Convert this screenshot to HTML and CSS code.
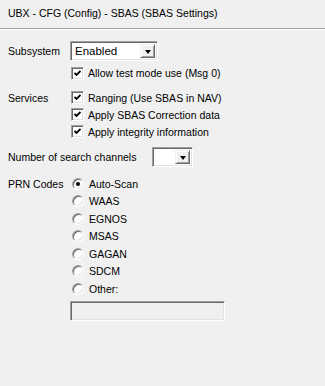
FILE: index.html
```html
<!DOCTYPE html>
<html lang="en">
<head>
  <meta charset="UTF-8">
  <title>UBX - CFG (Config) - SBAS</title>
  <link rel="stylesheet" href="styles.css">
</head>
<body>
  <div class="title">UBX - CFG (Config) - SBAS (SBAS Settings)</div>
  <div class="sep"></div>

  <div class="panel">
    <div class="row subsystem">
      <span class="label">Subsystem</span>
      <div class="combo wide">
        <span class="combo-text">Enabled</span>
        <span class="combo-btn"><span class="arrow"></span></span>
      </div>
    </div>

    <div class="row check-row test-row">
      <span class="label"></span>
      <span class="check on"><svg width="7" height="7" viewBox="0 0 7 7"><path d="M0.5 3 L2.5 5 L6.5 1" fill="none" stroke="#000" stroke-width="1.8"/></svg></span>
      <span class="text">Allow test mode use (Msg 0)</span>
    </div>

    <div class="services">
      <div class="row check-row">
        <span class="label">Services</span>
        <span class="check on"><svg width="7" height="7" viewBox="0 0 7 7"><path d="M0.5 3 L2.5 5 L6.5 1" fill="none" stroke="#000" stroke-width="1.8"/></svg></span>
        <span class="text">Ranging (Use SBAS in NAV)</span>
      </div>
      <div class="row check-row">
        <span class="label"></span>
        <span class="check on"><svg width="7" height="7" viewBox="0 0 7 7"><path d="M0.5 3 L2.5 5 L6.5 1" fill="none" stroke="#000" stroke-width="1.8"/></svg></span>
        <span class="text">Apply SBAS Correction data</span>
      </div>
      <div class="row check-row">
        <span class="label"></span>
        <span class="check on"><svg width="7" height="7" viewBox="0 0 7 7"><path d="M0.5 3 L2.5 5 L6.5 1" fill="none" stroke="#000" stroke-width="1.8"/></svg></span>
        <span class="text">Apply integrity information</span>
      </div>
    </div>

    <div class="row channels">
      <span class="label-long">Number of search channels</span>
      <div class="combo narrow">
        <span class="combo-text"></span>
        <span class="combo-btn"><span class="arrow"></span></span>
      </div>
    </div>

    <div class="prn">
      <div class="row radio-row">
        <span class="label">PRN Codes</span>
        <span class="radio on"></span>
        <span class="text">Auto-Scan</span>
      </div>
      <div class="row radio-row"><span class="label"></span><span class="radio"></span><span class="text">WAAS</span></div>
      <div class="row radio-row"><span class="label"></span><span class="radio"></span><span class="text">EGNOS</span></div>
      <div class="row radio-row"><span class="label"></span><span class="radio"></span><span class="text">MSAS</span></div>
      <div class="row radio-row"><span class="label"></span><span class="radio"></span><span class="text">GAGAN</span></div>
      <div class="row radio-row"><span class="label"></span><span class="radio"></span><span class="text">SDCM</span></div>
      <div class="row radio-row"><span class="label"></span><span class="radio"></span><span class="text">Other:</span></div>
      <div class="row other-row">
        <span class="label"></span>
        <div class="edit"></div>
      </div>
    </div>
  </div>
</body>
</html>
```

FILE: styles.css
```css
body { margin: 0; background: #f0f0f0; font-family: "Liberation Sans", Arial, sans-serif; font-size: 10.5px; color: #000; width: 325px; height: 386px; overflow: hidden; }
.title { height: 28px; line-height: 26px; padding-left: 8px; }
.sep { border-top: 1px solid #a0a0a0; border-bottom: 1px solid #fff; }
.panel { padding-left: 8px; }
.row { display: flex; align-items: center; }
.label { width: 62px; flex: none; }
.label-long { width: 144px; flex: none; }
.subsystem { margin-top: 11px; height: 20px; }
.combo { display: flex; height: 20px; box-sizing: border-box; background: #fff; border: 1px solid; border-color: #a0a0a0 #fff #fff #a0a0a0; box-shadow: inset 1px 1px #696969, inset -1px -1px #e3e3e3; padding: 2px; }
.combo.wide { width: 88px; }
.combo.narrow { width: 41px; }
.combo-text { flex: 1; line-height: 15px; padding-left: 2px; font-size: 11.5px; }
.combo-btn { width: 15px; height: 14px; box-sizing: border-box; background: #f0f0f0; border: 1px solid; border-color: #f0f0f0 #696969 #696969 #f0f0f0; box-shadow: inset 1px 1px #fff, inset -1px -1px #a0a0a0; display: flex; align-items: center; justify-content: center; }
.arrow { width: 0; height: 0; border-left: 3.5px solid transparent; border-right: 3.5px solid transparent; border-top: 4px solid #000; margin-top: 1px; }
.check-row { height: 17px; }
.test-row { margin-top: 4px; height: 16px; }
.services { margin-top: 8px; }
.check { width: 13px; height: 13px; box-sizing: border-box; flex: none; margin-left: 1px; background: #fff; border: 1px solid; border-color: #a0a0a0 #fff #fff #a0a0a0; box-shadow: inset 1px 1px #696969, inset -1px -1px #e3e3e3; display: flex; align-items: center; justify-content: center; }
.check svg { display: block; }
.text { margin-left: 4px; white-space: nowrap; }
.radio-row .text { margin-left: 5px; }
.channels { margin-top: 7px; height: 20px; }
.prn { margin-top: 8px; }
.radio-row { height: 17.5px; }
.radio { position: relative; width: 12px; height: 12px; box-sizing: border-box; flex: none; margin-left: 2px; border-radius: 50%; background: #fff; border: 1px solid; border-color: #a0a0a0 #fff #fff #a0a0a0; box-shadow: inset 1px 1px #696969, inset -1px -1px #e3e3e3; }
.radio.on::after { content: ""; position: absolute; left: 3px; top: 3px; width: 4px; height: 4px; border-radius: 50%; background: #000; }
.other-row { margin-top: 3px; }
.edit { width: 155px; height: 20px; box-sizing: border-box; background: #f0f0f0; border: 1px solid; border-color: #a0a0a0 #fff #fff #a0a0a0; box-shadow: inset 1px 1px #696969, inset -1px -1px #e3e3e3; }
```
